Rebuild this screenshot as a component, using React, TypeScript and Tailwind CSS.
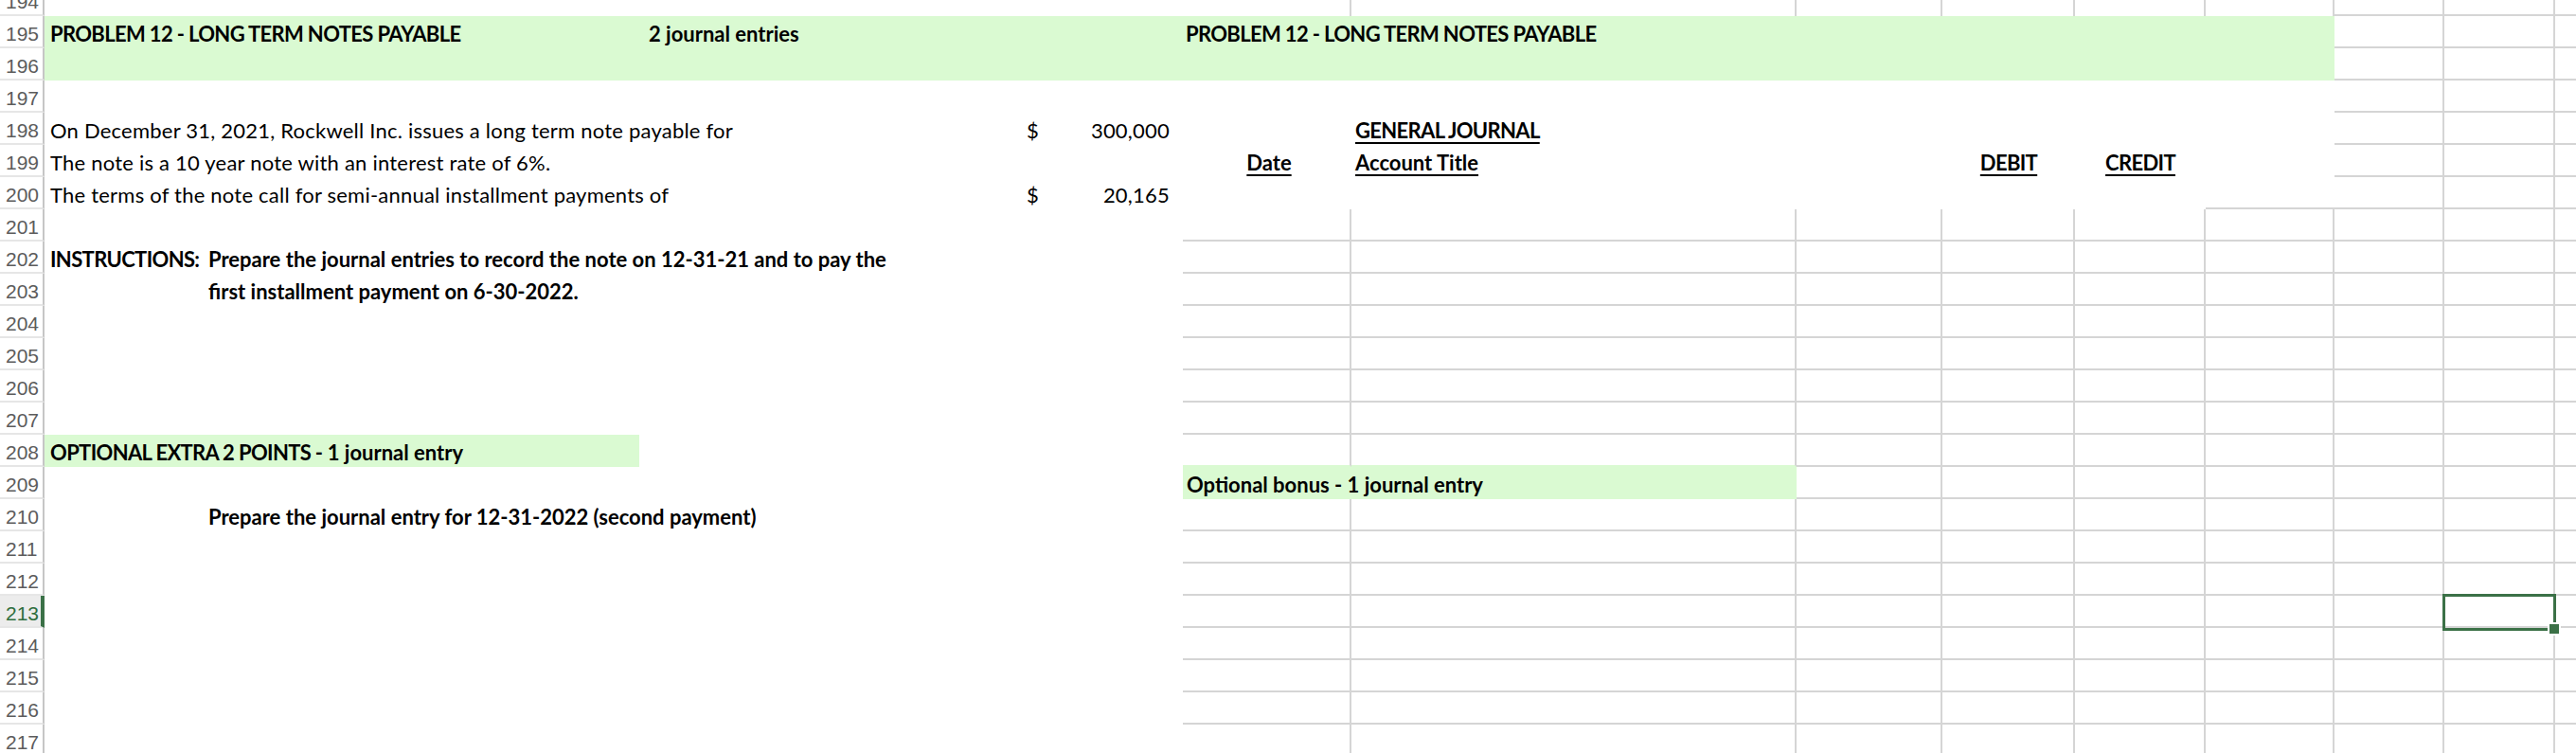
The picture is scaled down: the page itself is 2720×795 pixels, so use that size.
import React from 'react'
import clsx from 'clsx'

// gridline presets
const RB = 'border-r-2 border-b-2 border-[#d5d5d5]'
const R = 'border-r-2 border-[#d5d5d5]'
const B = 'border-b-2 border-[#d5d5d5]'
const GREEN = 'bg-[#dafad2]'

function Txt({ children, bold, u }: { children: React.ReactNode; bold?: boolean; u?: boolean }) {
  return (
    <span
      className={clsx(
        'font-[family-name:Lato,sans-serif] text-[22px] leading-none text-black whitespace-nowrap',
        bold ? 'font-bold' : 'tracking-[0.22px]',
        u && 'underline decoration-2 underline-offset-[4px]'
      )}
    >
      {children}
    </span>
  )
}

// Lato's bold capitals run wider than the sheet's font, so pull them in
function Caps({ children }: { children: React.ReactNode }) {
  return <span className="tracking-[-0.65px]">{children}</span>
}

function Cell({ w, line, className, children }: { w: string; line?: string; className?: string; children?: React.ReactNode }) {
  return <div className={clsx('shrink-0 h-full flex items-end pb-[4px] overflow-visible', w, line, className)}>{children}</div>
}

function RowHead({ n, active }: { n: number; active?: boolean }) {
  if (active) {
    return (
      <div className="w-[47px] shrink-0 h-full flex items-end pl-[6px] pb-[3px] border-r-4 border-b-2 border-r-[#3b7147] border-b-[#e6e6e6] bg-[#ececec] font-[family-name:'Liberation_Sans',Arial,sans-serif] text-[21px] leading-none text-[#2f6e3e]">
        {n}
      </div>
    )
  }
  return (
    <div className="w-[47px] shrink-0 h-full flex items-end pl-[6px] pb-[3px] border-r-2 border-b-2 border-r-[#c6c6c6] border-b-[#e6e6e6] bg-white font-[family-name:'Liberation_Sans',Arial,sans-serif] text-[21px] leading-none text-[#5c5c5c]">
      {n}
    </div>
  )
}

function Row({ n, active, children }: { n: number; active?: boolean; children?: React.ReactNode }) {
  return (
    <div className="flex h-[34px]">
      <RowHead n={n} active={active} />
      {children}
    </div>
  )
}

// left sheet area 47..1249, white fill, no gridlines
function Left({ a, b, c, d }: { a?: React.ReactNode; b?: React.ReactNode; c?: React.ReactNode; d?: React.ReactNode }) {
  return (
    <div className="flex w-[1202px] shrink-0 h-full">
      <Cell w="w-[166px]" className="pl-[6px]">{a}</Cell>
      <Cell w="w-[462px]" className="pl-[7px]">{b}</Cell>
      <Cell w="w-[400px]" className="pl-[10px]">{c}</Cell>
      <Cell w="w-[174px]" className="pl-[9px] pr-[14px] justify-between">{d}</Cell>
    </div>
  )
}

type Kind = 'top' | 'blank' | 'edge' | 'grid'

function Journal({ kind }: { kind: Kind }) {
  const l = kind === 'top' ? R : kind === 'grid' ? RB : ''
  return (
    <>
      <Cell w="w-[178px]" line={l} />
      <Cell w="w-[470px]" line={l} />
      <Cell w="w-[154px]" line={l} />
      <Cell w="w-[140px]" line={l} />
      <Cell w="w-[138px]" line={l} />
      <Cell w="w-[136px]" line={kind === 'edge' ? B : l} />
    </>
  )
}

function Tail({ selected }: { selected?: boolean }) {
  return (
    <>
      <Cell w="w-[116px]" line={RB} />
      <div className={clsx('shrink-0 h-full w-[117px] relative', RB)}>
        {selected && (
          <>
            <div className="absolute -left-[2px] -top-[2px] w-[120px] h-[39px] border-[3px] border-[#3b7147] z-10" />
            <div className="absolute left-[109px] top-[28px] w-[14px] h-[14px] bg-[#3b7147] border-2 border-white z-20" />
          </>
        )}
      </div>
      <Cell w="w-[80px]" line={RB} />
    </>
  )
}

function Money({ v }: { v: string }) {
  return (
    <>
      <Txt>$</Txt>
      <Txt>{v}</Txt>
    </>
  )
}

export default function App() {
  return (
    <div className="w-[2720px] h-[795px] overflow-hidden bg-white">
      <div className="-mt-[17px]">
        <Row n={194}>
          <Left />
          <Journal kind="top" />
          <Tail />
        </Row>
        <Row n={195}>
          <div className={clsx('shrink-0 w-[2418px] h-full flex', GREEN)}>
            <Cell w="w-[628px]" className="pl-[6px]">
              <Txt bold><Caps>PROBLEM 12 - LONG TERM NOTES PAYABLE</Caps></Txt>
            </Cell>
            <Cell w="w-[574px]" className="pl-[10px]">
              <Txt bold>2 journal entries</Txt>
            </Cell>
            <Cell w="w-[1216px]" className="pl-[3px]">
              <Txt bold><Caps>PROBLEM 12 - LONG TERM NOTES PAYABLE</Caps></Txt>
            </Cell>
          </div>
          <Tail />
        </Row>
        <Row n={196}>
          <div className={clsx('shrink-0 w-[2418px] h-full', GREEN)} />
          <Tail />
        </Row>
        <Row n={197}>
          <Left />
          <Journal kind="blank" />
          <Tail />
        </Row>
        <Row n={198}>
          <Left a={<Txt>On December 31, 2021, Rockwell Inc. issues a long term note payable for</Txt>} d={<Money v="300,000" />} />
          <Cell w="w-[178px]" />
          <Cell w="w-[470px]" className="pl-[4px]">
            <Txt bold u><Caps>GENERAL JOURNAL</Caps></Txt>
          </Cell>
          <Cell w="w-[154px]" />
          <Cell w="w-[140px]" />
          <Cell w="w-[138px]" />
          <Cell w="w-[136px]" />
          <Tail />
        </Row>
        <Row n={199}>
          <Left a={<Txt>The note is a 10 year note with an interest rate of 6%.</Txt>} />
          <Cell w="w-[178px]" className="justify-center pl-[4px]">
            <Txt bold u>Date</Txt>
          </Cell>
          <Cell w="w-[470px]" className="pl-[4px]">
            <Txt bold u>Account Title</Txt>
          </Cell>
          <Cell w="w-[154px]" />
          <Cell w="w-[140px]" className="justify-center">
            <Txt bold u><Caps>DEBIT</Caps></Txt>
          </Cell>
          <Cell w="w-[138px]" className="justify-center">
            <Txt bold u><Caps>CREDIT</Caps></Txt>
          </Cell>
          <Cell w="w-[136px]" />
          <Tail />
        </Row>
        <Row n={200}>
          <Left a={<Txt>The terms of the note call for semi-annual installment payments of</Txt>} d={<Money v="20,165" />} />
          <Journal kind="edge" />
          <Tail />
        </Row>
        <Row n={201}>
          <Left />
          <Journal kind="grid" />
          <Tail />
        </Row>
        <Row n={202}>
          <Left
            a={<Txt bold><Caps>INSTRUCTIONS:</Caps></Txt>}
            b={<Txt bold>Prepare the journal entries to record the note on 12-31-21 and to pay the</Txt>}
          />
          <Journal kind="grid" />
          <Tail />
        </Row>
        <Row n={203}>
          <Left b={<Txt bold>first installment payment on 6-30-2022.</Txt>} />
          <Journal kind="grid" />
          <Tail />
        </Row>
        {[204, 205, 206, 207].map((n) => (
          <Row key={n} n={n}>
            <Left />
            <Journal kind="grid" />
            <Tail />
          </Row>
        ))}
        <Row n={208}>
          <div className="flex w-[1202px] shrink-0 h-full">
            <Cell w="w-[628px]" className={clsx('pl-[6px]', GREEN)}>
              <Txt bold><Caps>OPTIONAL EXTRA 2 POINTS -</Caps> 1 journal entry</Txt>
            </Cell>
          </div>
          <Cell w="w-[178px]" className="border-r-2 border-b-2 border-[#d5d5d5] border-b-[#dafad2]" />
          <Cell w="w-[470px]" className="border-r-2 border-b-2 border-[#d5d5d5] border-b-[#dafad2]" />
          <Cell w="w-[154px]" line={RB} />
          <Cell w="w-[140px]" line={RB} />
          <Cell w="w-[138px]" line={RB} />
          <Cell w="w-[136px]" line={RB} />
          <Tail />
        </Row>
        <Row n={209}>
          <Left />
          <Cell w="w-[648px]" className={clsx('pl-[4px]', GREEN)}>
            <Txt bold>Optional bonus - 1 journal entry</Txt>
          </Cell>
          <Cell w="w-[154px]" line={RB} />
          <Cell w="w-[140px]" line={RB} />
          <Cell w="w-[138px]" line={RB} />
          <Cell w="w-[136px]" line={RB} />
          <Tail />
        </Row>
        <Row n={210}>
          <Left b={<Txt bold>Prepare the journal entry for 12-31-2022 (second payment)</Txt>} />
          <Journal kind="grid" />
          <Tail />
        </Row>
        {[211, 212, 213, 214, 215, 216, 217, 218].map((n) => (
          <Row key={n} n={n} active={n === 213}>
            <Left />
            <Journal kind="grid" />
            <Tail selected={n === 213} />
          </Row>
        ))}
      </div>
    </div>
  )
}
